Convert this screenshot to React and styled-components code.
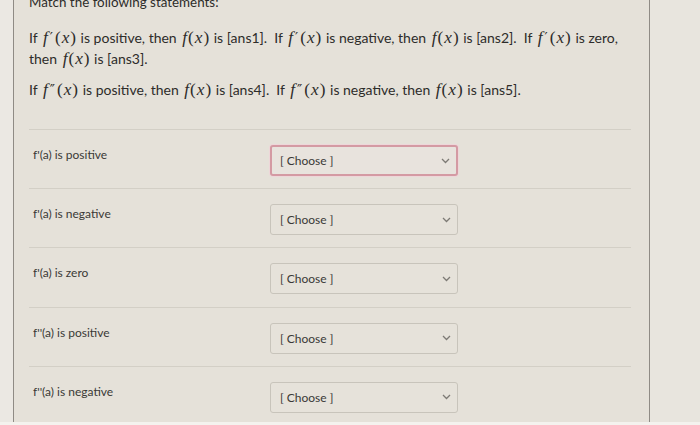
import React from 'react';
import styled, { createGlobalStyle } from 'styled-components';

const Global = createGlobalStyle`
  html, body {
    margin: 0;
    padding: 0;
    background: #f4f2ee;
  }
  body {
    font-family: Lato, "Open Sans", sans-serif;
  }
`;

const Page = styled.div`
  width: 700px;
  height: 422px;
  display: flex;
  overflow: hidden;
  background: #e5e1d9;
`;

const Gutter = styled.div`
  width: 13px;
  flex: none;
  background: #ebe8e3;
  border-right: 1px solid #8f8b85;
`;

const Main = styled.div`
  width: 636px;
  flex: none;
  padding: 0 18px 0 15px;
  box-sizing: border-box;
  border-right: 1px solid #8f8b85;
  color: #2b2a28;
`;

const Side = styled.div`
  flex: 1;
  background: #e8e5de;
`;

const Title = styled.h2`
  margin: -8px 0 0;
  font-size: 13.4px;
  font-weight: 400;
  line-height: 20px;
  color: #2d2c2a;
`;

const Para = styled.p`
  margin: ${(p) => p.$top}px 0 0;
  font-size: 14px;
  line-height: 21px;
  color: #2d2c2a;
`;

const MathSpan = styled.span`
  font-family: "Liberation Serif", "DejaVu Serif", serif;
  font-size: 17.2px;
  line-height: 1;
  white-space: nowrap;
  margin: 0 1px;
`;

const Mi = styled.span`
  font-style: italic;
  padding: 0 ${(p) => p.$pad || 0}px;
`;

const Prime = styled.span`
  font-family: "DejaVu Serif", serif;
  font-size: 14px;
  letter-spacing: -1px;
  margin: 0 3px 0 1px;
`;

const List = styled.div`
  margin-top: 29px;
`;

const Row = styled.div`
  display: flex;
  align-items: flex-start;
  height: 59.2px;
  box-sizing: border-box;
  border-top: 1px solid #d3cfc6;
  padding-top: 15px;
`;

const Label = styled.div`
  width: 237px;
  padding-left: 4px;
  padding-top: 3px;
  font-size: 12px;
  line-height: 14px;
  color: #3a3936;
  flex: none;
`;

const Select = styled.div`
  width: 188px;
  height: 31px;
  box-sizing: border-box;
  display: flex;
  align-items: center;
  justify-content: space-between;
  padding: 0 6px 0 ${(p) => (p.$focus ? 8 : 9)}px;
  border: ${(p) => (p.$focus ? '2px solid #d49aa3' : '1px solid #c8c4bb')};
  border-radius: 3px;
  background: ${(p) => (p.$focus ? '#e8e3dd' : '#e6e2da')};
  box-shadow: ${(p) => (p.$focus ? '0 0 0 1px #eed6d9' : 'none')};
  font-size: 12px;
  color: #3a3936;
`;

const Chevron = () => (
  <svg width="9" height="6" viewBox="0 0 9 6">
    <path d="M1 1l3.5 3.5L8 1" fill="none" stroke="#7d7a75" strokeWidth="1.3" />
  </svg>
);

const F = ({ primes = '' }) => (
  <MathSpan>
    <Mi $pad={1}>f</Mi>
    {primes && <Prime>{primes}</Prime>}
    (<Mi $pad={1}>x</Mi>)
  </MathSpan>
);

const rows = [
  { label: "f'(a) is positive", focus: true },
  { label: "f'(a) is negative" },
  { label: "f'(a) is zero" },
  { label: "f''(a) is positive" },
  { label: "f''(a) is negative" },
];

export default function App() {
  return (
    <>
      <Global />
      <Page>
        <Gutter />
        <Main>
          <Title>Match the following statements:</Title>
          <Para $top={15}>
            If <F primes="′" /> is positive, then <F /> is [ans1]. &nbsp;If <F primes="′" /> is negative, then{' '}
            <F /> is [ans2]. &nbsp;If <F primes="′" /> is zero, then <F /> is [ans3].
          </Para>
          <Para $top={10}>
            If <F primes="″" /> is positive, then <F /> is [ans4]. &nbsp;If <F primes="″" /> is negative, then{' '}
            <F /> is [ans5].
          </Para>
          <List>
            {rows.map((r, i) => (
              <Row key={i}>
                <Label>{r.label}</Label>
                <Select $focus={r.focus}>
                  <span>[ Choose ]</span>
                  <Chevron />
                </Select>
              </Row>
            ))}
          </List>
        </Main>
        <Side />
      </Page>
    </>
  );
}
